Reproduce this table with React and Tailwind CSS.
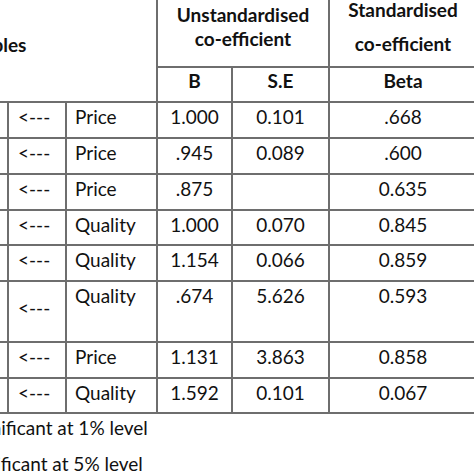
export default function App() {
  const rows = [
    { dir: "Price", b: "1.000", se: "0.101", beta: ".668", h: "h-[36px]" },
    { dir: "Price", b: ".945", se: "0.089", beta: ".600", h: "h-[36px]" },
    { dir: "Price", b: ".875", se: "", beta: "0.635", h: "h-[36px]" },
    { dir: "Quality", b: "1.000", se: "0.070", beta: "0.845", h: "h-[35px]" },
    { dir: "Quality", b: "1.154", se: "0.066", beta: "0.859", h: "h-[36px]" },
    { dir: "Quality", b: ".674", se: "5.626", beta: "0.593", h: "h-[61px]", tall: true },
    { dir: "Price", b: "1.131", se: "3.863", beta: "0.858", h: "h-[36px]" },
    { dir: "Quality", b: "1.592", se: "0.101", beta: "0.067", h: "h-[35px]" },
  ];

  const cell = "border-2 border-[#6e6e6e] p-0 align-top leading-[20px]";

  return (
    <div className="w-[474px] h-[474px] overflow-hidden bg-white text-[#111] font-['Lato',sans-serif] text-[19px]">
      <table className="border-collapse table-fixed mt-[-9px] ml-[-181px] w-[657px]">
        <colgroup>
          <col className="w-[188px]" />
          <col className="w-[58px]" />
          <col className="w-[91px]" />
          <col className="w-[75px]" />
          <col className="w-[97px]" />
          <col className="w-[148px]" />
        </colgroup>
        <thead>
          <tr className="h-[75px]">
            <th colSpan={3} rowSpan={2} className={`${cell} border-l-0 font-bold text-center pt-[42px]`}>
              Variables
            </th>
            <th colSpan={2} className={`${cell} font-bold text-center !leading-[24px] pt-[10px]`}>
              Unstandardised
              <br />
              co-efficient
            </th>
            <th className={`${cell} font-bold text-center !leading-[34px] pt-0`}>
              Standardised
              <br />
              co-efficient
            </th>
          </tr>
          <tr className="h-[35px]">
            <th className={`${cell} font-bold text-center pt-[3px]`}>B</th>
            <th className={`${cell} font-bold text-center pt-[3px]`}>S.E</th>
            <th className={`${cell} font-bold text-center pt-[3px]`}>Beta</th>
          </tr>
        </thead>
        <tbody>
          {rows.map((r, i) => (
            <tr key={i} className={r.h}>
              <td className={cell}></td>
              <td className={`${cell} pl-[9px] ${r.tall ? "pt-[16px]" : "pt-[4px]"}`}>&lt;---</td>
              <td className={`${cell} pl-[8px] ${r.tall ? "pt-[4px]" : "pt-[4px]"}`}>{r.dir}</td>
              <td className={`${cell} text-center ${r.tall ? "pt-[4px]" : "pt-[4px]"}`}>{r.b}</td>
              <td className={`${cell} text-center ${r.tall ? "pt-[4px]" : "pt-[4px]"}`}>{r.se}</td>
              <td className={`${cell} text-center ${r.tall ? "pt-[4px]" : "pt-[4px]"}`}>{r.beta}</td>
            </tr>
          ))}
        </tbody>
      </table>
      <div className="flex flex-col mt-[-4px] leading-[36px]">
        <p className="ml-[-34px] whitespace-nowrap">Significant at 1% level</p>
        <p className="ml-[-39px] whitespace-nowrap">Significant at 5% level</p>
      </div>
    </div>
  );
}
